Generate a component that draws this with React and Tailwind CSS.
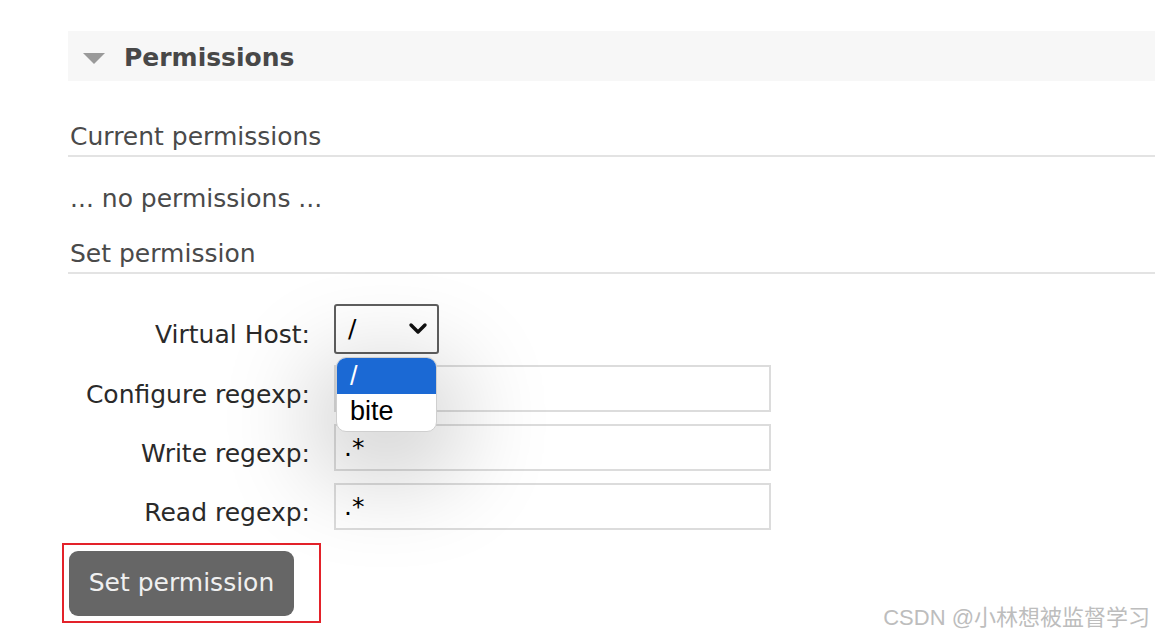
import React from "react";

const verdana = { fontFamily: '"DejaVu Sans", Verdana, sans-serif' };

function Row({ label, children }) {
  return (
    <div className="flex items-center">
      <div className="w-[243px] text-right pr-[1px] pt-[12px] text-[25px] leading-[30px] text-[#2a2a2a]">{label}</div>
      <div className="ml-[23px]">{children}</div>
    </div>
  );
}

function TextInput({ value }) {
  return (
    <div className="w-[437px] h-[47px] border-2 border-[#dcdcdc] bg-white flex items-center pl-[8px] text-[25px] leading-[30px] text-black">
      {value}
    </div>
  );
}

export default function App() {
  return (
    <div className="w-[1155px] h-[637px] bg-white relative overflow-hidden" style={verdana}>
      <div className="pl-[68px] pt-[31px]">
        <div className="h-[50px] bg-[#f7f7f7] flex items-center">
          <svg width="22" height="11" viewBox="0 0 22 11" className="ml-[15px] mt-[5px]">
            <polygon points="0,0 22,0 11,11" fill="#9a9a9a" />
          </svg>
          <span className="ml-[19px] mt-[3px] text-[25px] leading-[30px] font-bold text-[#484848]">Permissions</span>
        </div>

        <div className="mt-[41px] pl-[2px] pb-[3px] border-b-2 border-[#e3e3e3] text-[25px] text-[#4a4a4a] leading-[30px]">
          Current permissions
        </div>
        <div className="mt-[27px] pl-[2px] text-[25px] text-[#4a4a4a] leading-[30px]">
          ... no permissions ...
        </div>
        <div className="mt-[25px] pl-[2px] pb-[3px] border-b-2 border-[#e3e3e3] text-[25px] text-[#4a4a4a] leading-[30px]">
          Set permission
        </div>

        <div className="mt-[30px] flex flex-col">
          <Row label="Virtual Host:">
            <div className="w-[105px] h-[50px] border-2 border-[#5f5f5f] rounded-[3px] flex items-center justify-between pl-[12px] pr-[9px] text-[25px] leading-[30px] text-black">
              <span>/</span>
              <svg width="20" height="14" viewBox="0 0 20 14">
                <path d="M3 3 L10 10 L17 3" fill="none" stroke="#111" strokeWidth="3.4" strokeLinecap="round" strokeLinejoin="round" />
              </svg>
            </div>
          </Row>
          <div className="mt-[11px]">
            <Row label="Configure regexp:">
              <TextInput value="" />
            </Row>
          </div>
          <div className="mt-[12px]">
            <Row label="Write regexp:">
              <TextInput value=".*" />
            </Row>
          </div>
          <div className="mt-[12px]">
            <Row label="Read regexp:">
              <TextInput value=".*" />
            </Row>
          </div>
        </div>

        <div className="mt-[13px] -ml-[6px] w-[259px] h-[80px] border-2 border-[#e3222a] flex items-center pl-[5px]">
          <div className="w-[225px] h-[65px] rounded-[9px] bg-[#666666] text-[#f0f0f0] text-[25px] leading-[30px] flex items-center justify-center">
            Set permission
          </div>
        </div>
      </div>

      <div
        className="absolute left-[336px] top-[357px] w-[101px] rounded-[10px] bg-white overflow-hidden border border-[#cfcfcf] shadow-[0_25px_90px_25px_rgba(0,0,0,0.17)]"
        style={{ fontFamily: '"Liberation Sans", Arial, sans-serif' }}
      >
        <div className="h-[36px] bg-[#1b69d4] text-white text-[27px] pl-[13px] leading-[36px]">/</div>
        <div className="h-[37px] text-black text-[27px] pl-[13px] leading-[34px]">bite</div>
      </div>

      <div
        className="absolute right-[5px] bottom-[4px] text-[22px] leading-[30px] text-[#bdbdbd]"
        style={{ fontFamily: '"Liberation Sans", "Noto Sans CJK SC", sans-serif', textShadow: "0 0 1px #fff" }}
      >
        CSDN @小林想被监督学习
      </div>
    </div>
  );
}
